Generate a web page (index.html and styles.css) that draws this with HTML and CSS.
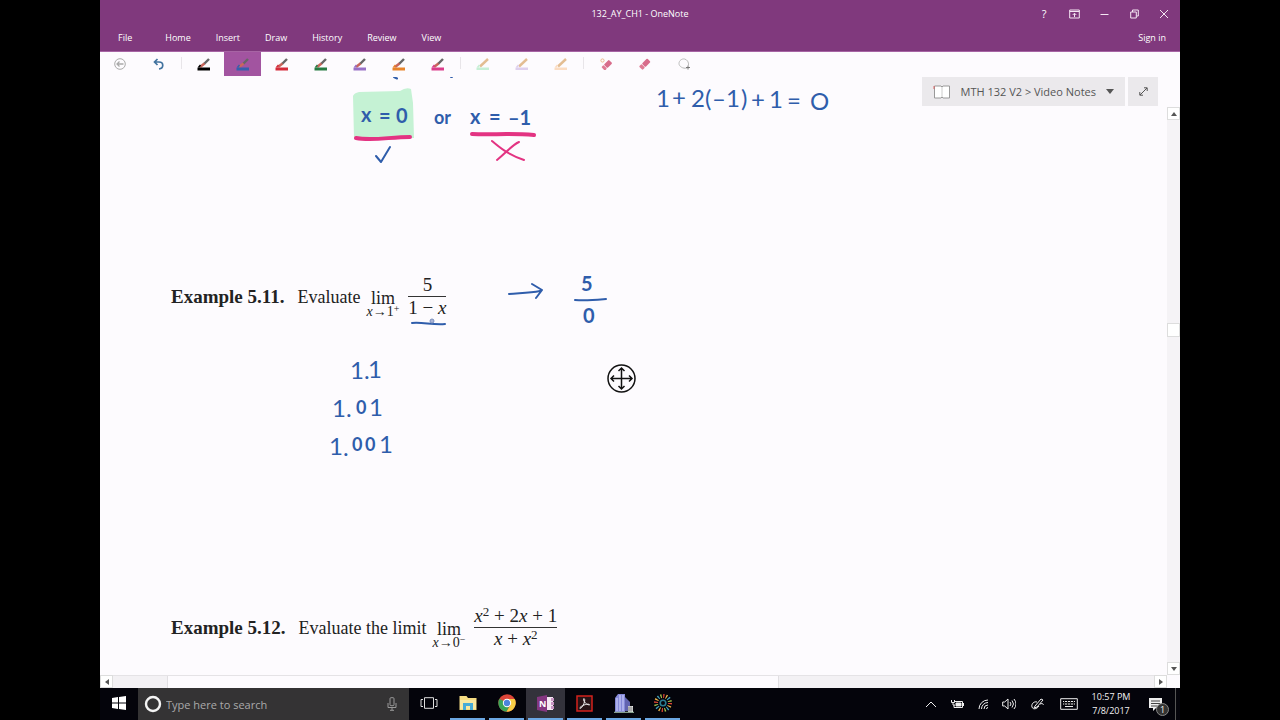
FILE: index.html
```
<!DOCTYPE html>
<html lang="en">
<head>
<meta charset="utf-8">
<title>132_AY_CH1 - OneNote</title>
<link rel="stylesheet" href="styles.css">
</head>
<body>
<svg class="defs" aria-hidden="true">
  <symbol id="pen" viewBox="0 0 14 13"><path d="M12 1 7 6" stroke="#666" stroke-width="2.4"/><path d="M7.500 5.500 3 9" stroke="#c8665c" stroke-width="2.600"/><path d="M3.500 7 1.500 9.500" stroke="currentColor" stroke-width="1.500"/><path d="M.5 9.500h12.500v3H.5z" fill="currentColor"/></symbol>
  <symbol id="marker" viewBox="0 0 14 13"><path d="M12 1 4 8.500" stroke="#e3bd92" stroke-width="2.400"/><path d="M3.500 7 1.500 9.500" stroke="currentColor" stroke-width="1.500"/><path d="M.5 9.500h12.500v2.500H.5z" fill="currentColor"/></symbol>
</svg>
<div class="app">
  <header class="header">
    <div class="titlebar">
      <h1 class="title">132_AY_CH1 - OneNote</h1>
      <div class="window-buttons">
        <button aria-label="Help">?</button>
        <button aria-label="Ribbon display options"><svg width="11" height="10" viewBox="0 0 11 10"><path d="M.7 1h9.600v8H.7zM.7 2.500h9.600M5.500 8V4.500M3.700 6l1.800-1.800L7.300 6"/></svg></button>
        <button aria-label="Minimize"><svg width="9" height="10" viewBox="0 0 9 10"><path d="M.5 5.500h8"/></svg></button>
        <button aria-label="Restore"><svg width="9" height="10" viewBox="0 0 9 10"><path d="M.7 3h5.600v6H.7zM2.500 3V1h5.800v6H6.500"/></svg></button>
        <button aria-label="Close"><svg width="10" height="10" viewBox="0 0 10 10"><path d="m1 1 8 8M9 1 1 9"/></svg></button>
      </div>
    </div>
    <nav class="tabs">
      <button class="file">File</button>
      <button>Home</button><button>Insert</button><button>Draw</button><button>History</button><button>Review</button><button>View</button>
      <a class="signin" href="#">Sign in</a>
    </nav>
  </header>
  <div class="toolbar">
    <button aria-label="Back"><svg width="12" height="12" viewBox="0 0 12 12" fill="none" stroke="#aaa"><circle cx="6" cy="6" r="5.300"/><path d="M9.500 6H3M5.500 3.500 3 6l2.500 2.500" stroke-width="1.300"/></svg></button>
    <button aria-label="Undo"><svg width="11" height="12" viewBox="0 0 11 12" fill="none" stroke="#41729f" stroke-width="1.700"><path d="M4.500 1 1.500 4l3 3M1.500 4H6c5 0 5 6.500 0 7"/></svg></button>
    <span class="sep"></span>
    <button class="black" aria-label="Black pen"><svg class="tool"><use href="#pen"/></svg></button>
    <button class="blue active" aria-label="Blue pen"><svg class="tool"><use href="#pen"/></svg></button>
    <button class="red" aria-label="Red pen"><svg class="tool"><use href="#pen"/></svg></button>
    <button class="green" aria-label="Green pen"><svg class="tool"><use href="#pen"/></svg></button>
    <button class="violet" aria-label="Purple pen"><svg class="tool"><use href="#pen"/></svg></button>
    <button class="orange" aria-label="Orange pen"><svg class="tool"><use href="#pen"/></svg></button>
    <button class="pink" aria-label="Pink pen"><svg class="tool"><use href="#pen"/></svg></button>
    <span class="sep"></span>
    <button class="mint" aria-label="Green highlighter"><svg class="tool"><use href="#marker"/></svg></button>
    <button class="lilac" aria-label="Purple highlighter"><svg class="tool"><use href="#marker"/></svg></button>
    <button class="peach" aria-label="Orange highlighter"><svg class="tool"><use href="#marker"/></svg></button>
    <span class="sep"></span>
    <button aria-label="Stroke eraser"><svg width="12" height="12" viewBox="0 0 12 12"><circle cx="2.500" cy="2.500" r="1.600" fill="none" stroke="#ecb98d"/><g transform="rotate(-45 7 7)"><rect x="1.500" y="4.500" width="3" height="5" rx="1" fill="#df7b94"/><rect x="5" y="4.500" width="7" height="5" rx="1" fill="#d86c8b"/></g></svg></button>
    <button aria-label="Eraser"><svg width="12" height="12" viewBox="0 0 12 12"><g transform="rotate(-45 6 6)"><rect x="0" y="3.500" width="3.500" height="5" rx="1" fill="#df7b94"/><rect x="4" y="3.500" width="7.500" height="5" rx="1" fill="#d86c8b"/></g></svg></button>
    <button aria-label="Lasso select"><svg width="12" height="12" viewBox="0 0 12 12" fill="none" stroke="#bbb"><path d="M9 10C5 11 1 8.500 1 5.500S4 .5 6.500 1 11 4 10.500 7.500"/><path d="M8 9.500h4M10 7.500v4" stroke="#777"/></svg></button>
  </div>
  <main class="workspace">
    <div class="page">
      <section class="example first">
        <b>Example 5.11.</b><span>Evaluate</span>
        <span class="limit"><span>lim</span><small><i>x</i>→1<sup>+</sup></small></span>
        <span class="fraction"><span>5</span><span>1 − <i>x</i></span></span>
      </section>
      <section class="example second">
        <b>Example 5.12.</b><span>Evaluate the limit</span>
        <span class="limit"><span>lim</span><small><i>x</i>→0<sup>−</sup></small></span>
        <span class="fraction"><span><i>x</i><sup>2</sup> + 2<i>x</i> + 1</span><span><i>x</i> + <i>x</i><sup>2</sup></span></span>
      </section>
      <svg class="ink" viewBox="100 77 1080 598">
        <path class="highlight" d="M353 96Q354 93 359 92L400 91Q406 87 411 89L413 103 414 138H354Z"/>
        <path class="blue-line" d="m394 77 3 1.500M451 77h1"/>
        <g class="words">
          <text x="361" y="122">x</text><text x="379" y="123">=</text><text x="396" y="123">0</text>
          <text class="or" x="434" y="124">or</text>
          <text x="470" y="124">x</text><text x="489" y="124">=</text><text x="508" y="125">–1</text>
        </g>
        <g class="words large">
          <text x="656" y="107">1</text><text x="672" y="106">+</text><text x="691" y="107">2</text><text x="705" y="107">(</text><text x="712" y="107">–1</text><text x="741" y="107">)</text><text x="751" y="108">+</text><text x="769" y="108">1</text><text x="787" y="109">=</text>
          <text x="810" y="110">O</text>
        </g>
        <g class="words">
          <text x="581" y="291">5</text><text x="583" y="323">0</text>
        </g>
        <g class="words large">
          <text x="350" y="379">1</text><text x="364" y="379">.</text><text x="368" y="378">1</text>
          <text x="332" y="417">1</text><text x="346" y="417">.</text><text x="369" y="416">1</text>
          <text x="329" y="455">1</text><text x="343" y="456">.</text><text x="379" y="453">1</text>
        </g>
        <g class="words small"><text x="356" y="414">0</text><text x="352" y="451">0</text><text x="365" y="451">0</text></g>
        <path class="blue-line" d="m376 156 5 6 9-15M509 294c10-1 20-1 31-3M532 284l10 6-6 8M575 300c11 1 20 0 31-1M412 323c11-1 20 2 33 1"/>
        <path class="pink-line heavy" d="M356 138c16 3 34-1 54-1M472 134c20 1 37-1 62 1"/>
        <path class="pink-line" d="M492 141c7 6 15 13 32 19M519 142c-7 3-12 10-22 18"/>
        <circle cx="432" cy="321" r="2" fill="#aab4d6" stroke="#7b8fbd"/>
        <g class="cursor"><circle cx="621.500" cy="378.500" r="13.500"/><path d="M611 378.500h21M621.500 368v21M614 375.500l-3 3 3 3M629 375.500l3 3-3 3M618.500 371l3-3 3 3M618.500 386l3 3 3-3"/></g>
      </svg>
      <div class="notebook">
        <button class="location"><svg width="18" height="14" viewBox="0 0 18 14"><path d="M1.500 1h6.500l1 1 1-1h6.500v12H10l-1-1-1 1H1.500z" fill="#fff" stroke="#999"/><path d="M9 2v10" stroke="#ccc"/><path d="M1 1v3" stroke="#d66"/></svg><span>MTH 132 V2 &gt; Video Notes</span><svg width="8" height="5" viewBox="0 0 8 5"><path d="M0 0h8L4 5z" fill="#555"/></svg></button>
        <button class="expand" aria-label="Full page view"><svg width="9" height="9" viewBox="0 0 9 9" fill="none" stroke="#555"><path d="m1 8 7-7M5 .8h3.200V4M.8 5v3.200H4"/></svg></button>
      </div>
    </div>
    <div class="vscroll"><button aria-label="Scroll up"><svg width="6" height="4" viewBox="0 0 6 4"><path d="M0 4h6L3 0z"/></svg></button><span class="vthumb"></span><button aria-label="Scroll down"><svg width="6" height="4" viewBox="0 0 6 4"><path d="M0 0h6L3 4z"/></svg></button></div>
  </main>
  <div class="hscroll"><button aria-label="Scroll left"><svg width="4" height="6" viewBox="0 0 4 6"><path d="M4 0v6L0 3z"/></svg></button><span class="htrack"><span class="hthumb"></span></span><button aria-label="Scroll right"><svg width="4" height="6" viewBox="0 0 4 6"><path d="M0 0v6l4-3z"/></svg></button><span class="corner"></span></div>
  <footer class="taskbar">
    <button class="task start" aria-label="Start"><svg width="14" height="14" viewBox="0 0 14 14" fill="#fff"><path d="m0 2 6-.9v5.400H0zM7 1l7-1v6.500H7zM0 7.500h6v5.400L0 12zM7 7.500h7V14l-7-1z"/></svg></button>
    <label class="search"><svg width="18" height="18" viewBox="0 0 18 18"><circle cx="9" cy="9" r="7" fill="none" stroke="#f4f4f4" stroke-width="2.400"/></svg><input type="text" placeholder="Type here to search" aria-label="Type here to search"><svg width="10" height="14" viewBox="0 0 10 14" fill="none" stroke="#999"><rect x="3" y=".7" width="4" height="8" rx="1"/><path d="M1 6v4.500h8V6M5 10.500V13M3 13.300h4"/></svg></label>
    <button class="task" aria-label="Task view"><svg width="18" height="12" viewBox="0 0 18 12" fill="none" stroke="#ddd"><path d="M4.500.7h9v10.600h-9zM3 2.500H1v7h2M15 2.500h2v7h-2"/></svg></button>
    <button class="task open" aria-label="File Explorer"><svg width="18" height="16" viewBox="0 0 18 16"><path d="M.5 1h7l1.500 2h8.500v12H.5z" fill="#f5dc83"/><path d="M1 5h16v9H1z" fill="#fae9a1"/><path d="M4 15V8h10v7h-3v-4H7v4z" fill="#48acd7"/></svg></button>
    <button class="task open" aria-label="Chrome"><svg width="18" height="18" viewBox="0 0 18 18"><circle cx="9" cy="9" r="8.700" fill="#dc4538"/><path d="M9 9 1.500 4.700A8.700 8.700 0 0 0 8.500 17.700L12 11z" fill="#39a456"/><path d="M9 5h7.700A8.700 8.700 0 0 1 8.500 17.700L12.500 11z" fill="#f7ce45"/><circle cx="9" cy="9" r="4.200" fill="#fff"/><circle cx="9" cy="9" r="3.200" fill="#4c84db"/></svg></button>
    <button class="task open current" aria-label="OneNote"><svg width="18" height="17" viewBox="0 0 18 17"><path d="M9 2h7v13H9z" fill="#f6e8f4"/><path d="M14 3h3v3h-3zM14 7h3v3h-3zM14 11h3v3h-3z" fill="#c794c2"/><path d="m0 2 10-2v17L0 15z" fill="#843680"/><text x="2" y="12" class="badge-letter">N</text></svg></button>
    <button class="task open" aria-label="Acrobat Reader"><svg width="17" height="17" viewBox="0 0 17 17"><path d="M1 1h15v15H1z" fill="#261316" stroke="#d3221d" stroke-width="1.500"/><path d="M8 3.500c-1.500 1 1 6 5.500 6.500.7-1.500-6-1-9.500 2.500-1 2 2 .5 3-2 1.500-3 2.500-6 1-7z" fill="none" stroke="#eee"/></svg></button>
    <button class="task open" aria-label="Buildings"><svg width="20" height="20" viewBox="0 0 20 20"><path d="M1 19V5l3-4h7v18z" fill="#8589d8"/><path d="M3 18V5M6 18V2M9 18V2" stroke="#d4d7ff"/><path d="M11 18V4l5 5v9z" fill="#6264af"/><path d="M14 13h5v6h-5z" fill="#eee"/><path d="M15 13v6M17 13v6M14 15h5M14 17h5" stroke="#777" stroke-width=".7"/><path d="M0 19.300h20" stroke="#a5c5ab"/></svg></button>
    <button class="task open" aria-label="Sunburst"><svg width="18" height="18" viewBox="-9 -9 18 18" fill="none" stroke-width="1.600"><circle r="7" stroke="#e14635" stroke-width="4" stroke-dasharray="1.200 9.795"/><circle r="7" stroke="#f0b84a" stroke-width="4" stroke-dasharray="1.200 9.795" stroke-dashoffset="-2.750"/><circle r="7" stroke="#3fa1ba" stroke-width="4" stroke-dasharray="1.200 9.795" stroke-dashoffset="-5.500"/><circle r="7" stroke="#a8c74f" stroke-width="4" stroke-dasharray="1.200 9.795" stroke-dashoffset="-8.250"/><circle r="2.800" stroke="#297b91"/></svg></button>
    <div class="tray">
      <button aria-label="Show hidden icons"><svg width="10" height="7" viewBox="0 0 10 7"><path d="m0 6 5-5 5 5"/></svg></button>
      <button aria-label="Battery"><svg width="13" height="10" viewBox="0 0 13 10"><path d="M4 2.500h7.500v6H3V6M12.500 4v3"/><path d="M5 4h5v3H5z" fill="#eee"/><path d="M.5 1v2.500h3V1M2 3.500V6h2"/></svg></button>
      <button aria-label="Wireless network"><svg width="11" height="11" viewBox="0 0 11 11"><path d="M1 10A9 9 0 0 1 10 1M3.500 10A6.500 6.500 0 0 1 10 3.500M6 10a4 4 0 0 1 4-4M8.500 10A1.500 1.500 0 0 1 10 8.500"/></svg></button>
      <button aria-label="Volume"><svg width="14" height="12" viewBox="0 0 14 12"><path d="M.7 4h2L6 1v10L2.700 8h-2zM8 4q2 2 0 4M10 2.500q3 3.500 0 7M12 1q4 5 0 10"/></svg></button>
      <button class="pen-button" aria-label="Windows Ink"><svg width="13" height="12" viewBox="0 0 13 12"><path d="m4 8 6-7 2 1-6 7-3 1zM6 4C3 3 0 6 1 9s5 2 7-1M9 6c2-1 4 0 3 1"/></svg></button>
      <button class="keyboard" aria-label="Touch keyboard"><svg width="18" height="12" viewBox="0 0 18 12"><path d="M.7.7h16.600v10.600H.7zM3 3.500h12M3 6h12"/><path d="M5 8.500h8"/><path d="M4.500 3v4M7.500 3v4M10.500 3v4M13.500 3v4" stroke="#222"/></svg></button>
      <time class="clock" datetime="2017-07-08T22:57"><span>10:57 PM</span><span>7/8/2017</span></time>
      <button class="notifications" aria-label="1 notification"><svg width="13" height="13" viewBox="0 0 13 13"><path d="M0 0h13v10H7l-3 3v-3H0z" fill="#eee" stroke="none"/><path d="M2 3h9M2 5.500h9M2 8h6" stroke="#444"/></svg><span class="count">1</span></button>
    </div>
  </footer>
</div>
</body>
</html>
```
FILE: styles.css
```
* { box-sizing: border-box; }
body { margin: 0; background: #000; font-family: "Open Sans", "Noto Sans", sans-serif; }
button { margin: 0; padding: 0; border: 0; background: none; color: inherit; font: inherit; display: flex; align-items: center; justify-content: center; }
svg { flex: none; display: block; }
.defs { position: absolute; width: 0; height: 0; }
.app { min-height: 100vh; margin: 0 100px; display: flex; flex-direction: column; background: #fdfbfe; }

.header { height: 52px; background: #80397d; color: #fff; font-size: 9px; border-bottom: 1px solid #a764a4; display: flex; flex-direction: column; }
.titlebar { height: 24px; display: grid; grid-template-columns: 1fr auto 1fr; align-items: center; padding-top: 3px; }
.title { grid-column: 2; margin: 0; font-size: 9px; font-weight: 400; }
.window-buttons { justify-self: end; display: flex; padding-right: 1px; }
.window-buttons button { width: 30px; height: 16px; font-size: 11px; }
.window-buttons svg { fill: none; stroke: #f4e6f3; }
.tabs { height: 27px; display: flex; align-items: center; padding: 0 14px 0 18px; gap: 25px; }
.tabs .file { margin-right: 8px; }
.signin { margin-left: auto; color: inherit; text-decoration: none; }

.toolbar { height: 25px; display: flex; align-items: flex-start; }
.toolbar button { width: 39px; height: 24px; }
.tool { width: 14px; height: 13px; }
.sep { width: 6px; height: 12px; margin-top: 5px; background: linear-gradient(#e8e5e9, #e8e5e9) center / 1px 100% no-repeat; }
.toolbar .active { background: #a254a0 content-box; padding: 0 1px; }
.black { color: #000; } .blue { color: #365fac; } .red { color: #d52b3a; }
.green { color: #267b43; } .violet { color: #9870c7; } .orange { color: #e8842a; }
.pink { color: #db3d8c; } .mint { color: #c6efd5; } .lilac { color: #decfed; } .peach { color: #fbdcc2; }

.workspace { flex: 1; min-height: 598px; display: flex; }
.page { flex: 1; position: relative; overflow: hidden; }
.ink { position: absolute; left: 0; top: 0; width: 1080px; height: 598px; }
.highlight { fill: #c5f2d4; }
.blue-line, .pink-line { fill: none; stroke: #2f5dab; stroke-width: 2; stroke-linecap: round; stroke-linejoin: round; }
.pink-line { stroke: #e33382; }
.pink-line.heavy { stroke-width: 4; }
.words { fill: #2f5dab; font: bold 20px Lato, sans-serif; }
.words .or { font-size: 18px; }
.large { font-size: 24px; font-weight: 400; }
.small { font-size: 18px; }
.cursor { fill: none; stroke: #111; stroke-width: 1.5; }

.example { position: absolute; left: 71px; display: flex; align-items: center; color: #222; font: 18px/22px "Liberation Serif", serif; white-space: nowrap; }
.first { top: 197px; }
.second { top: 528px; }
.example b { font-size: 19px; margin-right: 13px; }
.limit { display: flex; flex-direction: column; align-items: center; margin: 12px 9px 0 6px; }
.limit > span { line-height: 18px; }
.limit small { font-size: 14px; line-height: 10px; }
.example sup { font-size: 13px; line-height: 0; vertical-align: 6px; }
.limit small sup { font-size: 10px; vertical-align: 4px; }
.fraction { display: flex; flex-direction: column; text-align: center; font-size: 19px; }
.fraction span:first-child { border-bottom: 1px solid #333; }

.notebook { position: absolute; top: 0; right: 9px; display: flex; gap: 3px; color: #555; font-size: 11px; }
.notebook button { height: 29px; background: #ebe9ec; }
.location { gap: 10px; padding: 0 11px; }
.notebook .location { padding: 0 11px; }
.notebook .expand { width: 30px; }
.vscroll { width: 13px; margin-top: 30px; background: #f5f3f6; display: flex; flex-direction: column; }
.vscroll button, .hscroll button { width: 13px; height: 13px; background: #fff; border: 1px solid #ddd; fill: #555; }
.vthumb { height: 14px; margin-top: 203px; margin-bottom: auto; background: #fff; border: 1px solid #ddd; }
.hscroll { height: 13px; display: flex; background: #f3f1f4; }
.htrack { flex: 1; border-top: 1px solid #e5e3e6; padding-left: 5%; display: flex; }
.hthumb { width: 62%; background: #fdfbfe; border: 1px solid #e1dfe2; border-width: 0 1px; }
.corner { width: 13px; background: #fdfbfe; }

.taskbar { height: 32px; background: #04040b; color: #f2f2f2; display: flex; }
.task { width: 39px; border-bottom: 2px solid transparent; }
.task.start { width: 38px; }
.task.open { border-image: linear-gradient(90deg, transparent 4px, #6ba7e3 4px, #6ba7e3 35px, transparent 35px) 2; border-width: 0 0 2px; border-style: solid; }
.task.current { background: #33323b; }
.search { width: 271px; background: #343334; display: flex; align-items: center; gap: 4px; padding: 0 12px 0 6px; }
.search input { flex: 1; min-width: 0; border: 0; padding: 0; background: none; color: #fff; font: 11px "Open Sans", sans-serif; }
.search input::placeholder { color: #aaa; opacity: 1; }
.badge-letter { fill: #fff; font: bold 9px "Open Sans", sans-serif; }
.tray { margin-left: auto; padding-right: 4px; display: flex; }
.tray button { width: 26px; }
.tray svg { fill: none; stroke: #eee; }
.tray .pen-button { width: 30px; }
.tray .keyboard { width: 34px; }
.clock { width: 50px; font-size: 9px; line-height: 14px; display: flex; flex-direction: column; justify-content: center; align-items: center; white-space: nowrap; }
.tray .notifications { width: 40px; position: relative; border-right: 1px solid #555; }
.count { position: absolute; left: 20px; top: 15px; width: 13px; height: 13px; border: 1px solid #888; border-radius: 50%; background: #333; font-size: 9px; line-height: 11px; text-align: center; }
```
